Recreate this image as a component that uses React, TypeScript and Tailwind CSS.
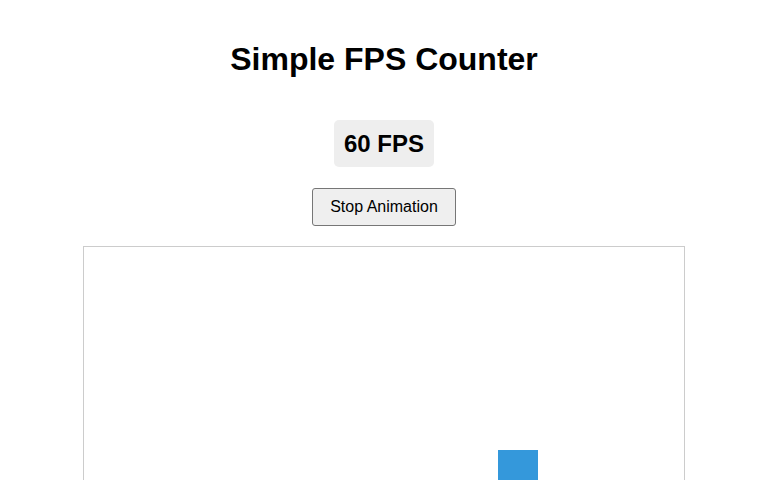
import React from "react";

export default function App() {
  return (
    <div
      className="flex flex-col items-center bg-white pt-[20px] text-black"
      style={{ fontFamily: '"Liberation Sans", Arial, sans-serif' }}
    >
      <h1 className="mt-[21px] mb-[21px] text-[32px] leading-[37px] font-bold">Simple FPS Counter</h1>
      <div className="mt-[21px] rounded-[5px] bg-[#eeeeee] px-[10px] py-[10px] text-[24px] leading-[27px] font-bold">
        60 FPS
      </div>
      <button className="mt-[21px] h-[38px] w-[144px] rounded-[3px] border border-[#767676] bg-[#efefef] text-[16px] leading-[18px] text-black">
        Stop Animation
      </button>
      <div className="relative mt-[20px] h-[402px] w-[602px] border border-[#cccccc] bg-white">
        <div className="absolute left-[414px] top-[203px] h-[40px] w-[40px] bg-[#3498db]" />
      </div>
    </div>
  );
}
